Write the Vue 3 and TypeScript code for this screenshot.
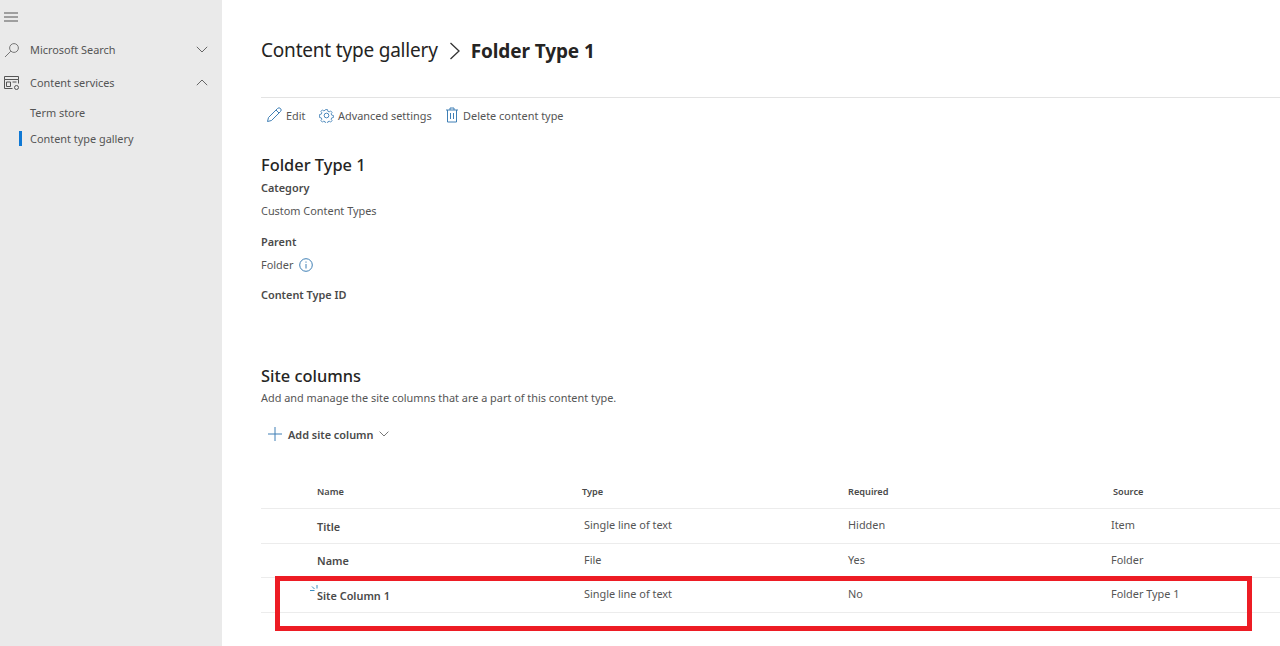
<template>
  <div class="page">
    <aside class="nav">
      <button class="burger" aria-label="Menu">
        <svg width="14" height="10" viewBox="0 0 14 10"><path d="M0 1h14M0 5h14M0 9h14" stroke="#555" fill="none" /></svg>
      </button>
      <div class="nav-group search">
        <svg class="nav-icon" width="16" height="16" viewBox="0 0 16 16" fill="none" stroke="#777">
          <circle cx="10" cy="6" r="4.4" />
          <path d="M6.8 9.2 1 15" />
        </svg>
        <span class="nav-label">Microsoft Search</span>
        <svg class="chev" width="12" height="7" viewBox="0 0 12 7"><path d="M.8.8 6 6l5.2-5.2" fill="none" stroke="#666" /></svg>
      </div>
      <div class="nav-group">
        <svg class="nav-icon" width="16" height="16" viewBox="0 0 16 16" fill="none" stroke="#555">
          <path d="M.5 1.500h14v3H.5zM.5 4.500v9h8M14.500 4.500v4" />
          <path d="M2.500 7h4v4.500h-4z" />
          <path d="M8.500 7h4" />
          <circle cx="12.500" cy="12.500" r="2" />
        </svg>
        <span class="nav-label">Content services</span>
        <svg class="chev" width="12" height="7" viewBox="0 0 12 7"><path d="M.8 6.200 6 1l5.200 5.200" fill="none" stroke="#666" /></svg>
      </div>
      <a class="sub-item term">Term store</a>
      <a class="sub-item active">Content type gallery</a>
    </aside>

    <main class="content">
      <header class="crumbs">
        <span class="crumb">Content type gallery</span>
        <svg class="crumb-sep" width="12" height="18" viewBox="0 0 12 18"><path d="M1.500 1 10 9l-8.500 8" fill="none" stroke="#333" stroke-width="1.300" /></svg>
        <strong class="crumb-current">{{ typeName }}</strong>
      </header>

      <div class="toolbar">
        <button class="tool">
          <svg width="16" height="16" viewBox="0 0 16 16" fill="none" stroke="#3f7fb5">
            <path d="M1.500 14.500 2.500 10.500 11.500 1.500a1.800 1.800 0 0 1 3 3l-9 9z" />
            <path d="M10 3l3 3" />
          </svg>
          Edit
        </button>
        <button class="tool">
          <svg width="15" height="15" viewBox="0 0 16 16" fill="none" stroke="#3f7fb5">
            <circle cx="8" cy="8" r="2.500" />
            <path d="M6.800 1h2.400l.4 2 1.600.7 1.700-1.100 1.700 1.700-1.100 1.700.7 1.600 2 .4v2.400l-2 .4-.7 1.600 1.100 1.700-1.700 1.700-1.700-1.100-1.600.7-.4 2H6.800l-.4-2-1.600-.7-1.700 1.100-1.700-1.700 1.100-1.700-.7-1.600-2-.4V6.800l2-.4.700-1.600-1.100-1.700 1.700-1.700 1.700 1.100 1.600-.7z" transform="translate(.8 .8) scale(.9)" />
          </svg>
          Advanced settings
        </button>
        <button class="tool">
          <svg width="14" height="16" viewBox="0 0 14 16" fill="none" stroke="#3f7fb5">
            <path d="M1 3h12M5 3V1h4v2M2.500 3v12h9V3M5.500 6v6M8.500 6v6" />
          </svg>
          Delete content type
        </button>
      </div>

      <section class="details">
        <h2 class="title">{{ typeName }}</h2>
        <div class="field-label">Category</div>
        <div class="field-value">Custom Content Types</div>
        <div class="field-label parent">Parent</div>
        <div class="field-value with-info">
          Folder
          <svg width="14" height="14" viewBox="0 0 14 14" fill="none" stroke="#3f7fb5">
            <circle cx="7" cy="7" r="6.300" />
            <path d="M7 6v4.500M7 3.500v1.200" />
          </svg>
        </div>
        <div class="field-label type-id">Content Type ID</div>
      </section>

      <section class="columns">
        <h2 class="title">Site columns</h2>
        <p class="intro">Add and manage the site columns that are a part of this content type.</p>
        <button class="add">
          <svg width="14" height="14" viewBox="0 0 14 14"><path d="M7 0v14M0 7h14" stroke="#3f7fb5" fill="none" /></svg>
          <span>Add site column</span>
          <svg width="10" height="6" viewBox="0 0 10 6"><path d="M.6.600 5 5 9.400.600" fill="none" stroke="#777" /></svg>
        </button>

        <div class="table">
          <div class="row head">
            <div>Name</div>
            <div>Type</div>
            <div>Required</div>
            <div>Source</div>
          </div>
          <div v-for="col in rows" :key="col.name" class="row">
            <div class="name">{{ col.name }}</div>
            <div class="cell">{{ col.type }}</div>
            <div class="cell required">{{ col.required }}</div>
            <div class="cell source">{{ col.source }}</div>
          </div>
        </div>
      </section>
    </main>

    <svg class="spinner" width="9" height="9" viewBox="0 0 9 9" fill="none" stroke="#3f8fc0">
      <path d="M0 5.500h4.500M2 1.500l2.500 2.500M7 0v3.500" />
    </svg>
    <div class="highlight"></div>
  </div>
</template>

<script setup lang="ts">
interface SiteColumn {
  name: string
  type: string
  required: string
  source: string
}

const typeName = 'Folder Type 1'

const rows: SiteColumn[] = [
  { name: 'Title', type: 'Single line of text', required: 'Hidden', source: 'Item' },
  { name: 'Name', type: 'File', required: 'Yes', source: 'Folder' },
  { name: 'Site Column 1', type: 'Single line of text', required: 'No', source: 'Folder Type 1' }
]
</script>

<style>
html,
body {
  margin: 0;
  background: #fff;
  overflow: hidden;
}
</style>

<style scoped>
.page {
  position: relative;
  display: flex;
  width: 1280px;
  height: 646px;
  overflow: hidden;
  font-family: "Noto Sans", "Open Sans", sans-serif;
  color: #4a4a4a;
  font-size: 10.9px;
}

button {
  border: 0;
  padding: 0;
  background: none;
  font: inherit;
  color: inherit;
}

.nav {
  flex: 0 0 222px;
  background: #eaeaea;
  color: #555;
  box-sizing: border-box;
  padding-top: 12px;
}

.burger {
  display: block;
  margin-left: 4px;
  height: 10px;
  line-height: 0;
}

.nav-group {
  display: flex;
  align-items: center;
  height: 33px;
  padding-left: 4px;
}

.search {
  margin-top: 11px;
}

.nav-icon {
  flex: none;
}

.nav-label {
  margin-left: 10px;
  flex: 1;
}

.chev {
  margin-right: 14px;
}

.sub-item {
  display: block;
  position: relative;
  height: 26px;
  line-height: 26px;
  padding-left: 30px;
}

.term {
  margin-top: 1px;
}

.active::before {
  content: "";
  position: absolute;
  left: 19px;
  top: 5px;
  width: 3px;
  height: 15px;
  background: #0f78d4;
}

.content {
  flex: 1;
  min-width: 0;
  padding: 36px 0 0 39px;
}

.crumbs {
  display: flex;
  align-items: center;
  height: 28px;
  color: #252423;
  padding-bottom: 33px;
  border-bottom: 1px solid #e3e3e3;
}

.crumb {
  font-size: 19px;
  letter-spacing: -0.2px;
  margin-top: -1px;
}

.crumb-sep {
  margin: 2px 10px 0 11px;
}

.crumb-current {
  font-size: 19px;
  font-weight: 700;
  letter-spacing: -0.1px;
  margin-top: 1px;
}

.toolbar {
  display: flex;
  align-items: center;
  height: 34px;
  padding-left: 5px;
  gap: 13.5px;
  color: #555;
}

.tool {
  display: flex;
  align-items: center;
  gap: 4px;
}

.details {
  margin-top: 21px;
}

.title {
  margin: 0;
  font-size: 16.4px;
  line-height: 23px;
  font-weight: 500;
  color: #252423;
}

.field-label {
  font-weight: 600;
  line-height: 16px;
  margin-top: 4px;
}

.field-value {
  line-height: 16px;
  margin-top: 7px;
  color: #555;
}

.parent {
  margin-top: 15px;
}

.with-info {
  display: flex;
  align-items: center;
  gap: 6px;
}

.type-id {
  margin-top: 14px;
}

.columns {
  margin-top: 61px;
}

.intro {
  margin: 3px 0 0;
  line-height: 16px;
  color: #555;
}

.add {
  display: flex;
  align-items: center;
  margin: 18px 0 0 7px;
  height: 20px;
  gap: 6px;
  font-weight: 600;
}

.table {
  margin-top: 30px;
}

.row {
  display: grid;
  grid-template-columns: 265px 266px 265px 1fr;
  height: 34.5px;
  align-items: center;
  padding-left: 56px;
  box-sizing: border-box;
  border-bottom: 1px solid #ececec;
}

.head {
  height: 35px;
  font-size: 9.2px;
  font-weight: 600;
}

.name {
  font-weight: 600;
  padding-top: 1px;
}

.cell {
  padding-left: 2px;
  margin-top: -2px;
  color: #555;
}

.required {
  padding-left: 0;
}

.source {
  padding-left: 0;
  margin-left: -2px;
}

.spinner {
  position: absolute;
  left: 310px;
  top: 585px;
}

.highlight {
  position: absolute;
  left: 275px;
  top: 576px;
  width: 977px;
  height: 55px;
  box-sizing: border-box;
  border: 5px solid #ed1c24;
  pointer-events: none;
}
</style>
